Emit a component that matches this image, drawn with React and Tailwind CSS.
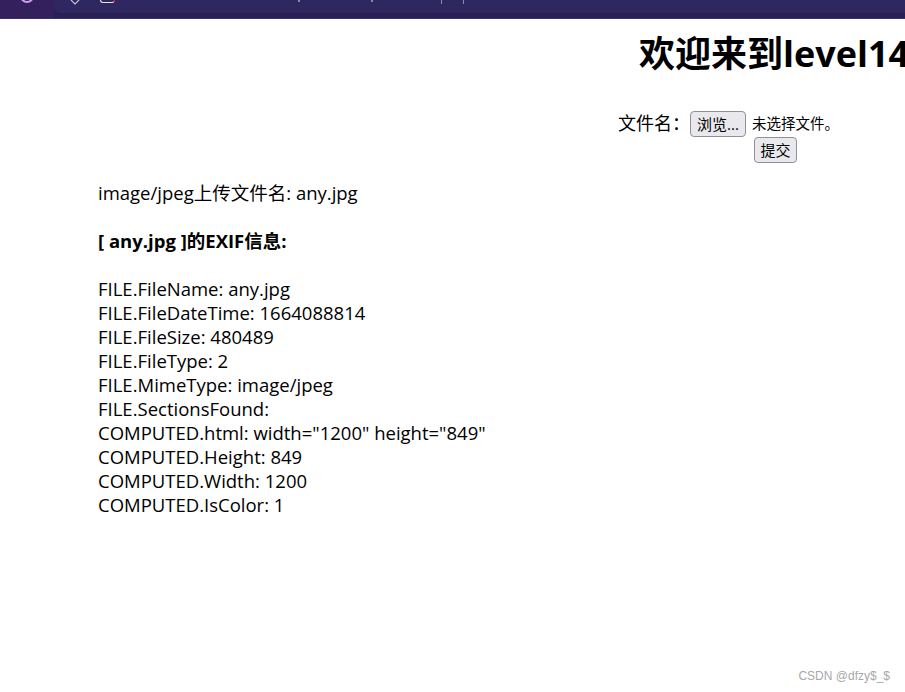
const font = { fontFamily: '"Open Sans", "Noto Sans CJK SC", sans-serif' }

const exifRows = [
  'FILE.FileName: any.jpg',
  'FILE.FileDateTime: 1664088814',
  'FILE.FileSize: 480489',
  'FILE.FileType: 2',
  'FILE.MimeType: image/jpeg',
  'FILE.SectionsFound:',
  'COMPUTED.html: width="1200" height="849"',
  'COMPUTED.Height: 849',
  'COMPUTED.Width: 1200',
  'COMPUTED.IsColor: 1',
]

function BrowserBar() {
  return (
    <div className="h-[19px] bg-[#2a1f55] border-b border-[#3a2f70] overflow-hidden">
      <div className="flex h-[18px]">
        <div className="w-[54px] h-full bg-[#33205c] flex justify-center">
          <div className="w-[14px] h-[14px] -mt-[11px] rounded-full border-2 border-[#c9a0f0]" />
        </div>
        <div className="flex-1 h-[13px] bg-[#2f2760] rounded-bl-md flex items-start">
          <div className="ml-[17px] w-[8px] h-[8px] -mt-[5px] rotate-45 border border-[#d8d4e8]" />
          <div className="ml-[21px] w-[15px] h-[3px] border-b border-l border-r border-[#e6e3f0] border-r-[#e0304a] rounded-b-sm" />
          <div className="ml-[183px] w-[2px] h-[2px] bg-[#8f8ab0]" />
          <div className="ml-[71px] w-[2px] h-[2px] bg-[#8f8ab0]" />
          <div className="ml-[68px] w-[1px] h-[4px] bg-[#8f8ab0]" />
          <div className="ml-[21px] w-[1px] h-[4px] bg-[#8f8ab0]" />
        </div>
      </div>
    </div>
  )
}

export default function App() {
  return (
    <div className="relative h-[692px] w-[905px] overflow-hidden bg-white text-black" style={font}>
      <BrowserBar />

      <h1 className="pl-[639px] pt-[13px] h-[72px] text-[36px] leading-[44px] font-bold whitespace-nowrap">欢迎来到level14</h1>

      <form className="pl-[618px] h-[90px] pt-[20px]">
        <div className="flex items-center h-[26px] whitespace-nowrap">
          <span className="text-[18px] -mt-[2px]">文件名：</span>
          <button type="button" className="h-[26px] w-[56px] rounded-[4px] border border-[#8f8f9d] bg-[#e9e9ed] text-[15px] leading-[22px]">浏览...</button>
          <span className="ml-[6px] text-[14.5px]">未选择文件。</span>
        </div>
        <button type="button" className="ml-[136px] h-[26px] w-[43px] rounded-[4px] border border-[#8f8f9d] bg-[#e9e9ed] text-[15px] leading-[22px]">提交</button>
      </form>

      <div className="pl-[98px] text-[18.5px] leading-[24px]">
        <p>image/jpeg上传文件名: any.jpg</p>
        <p className="mt-[24px] font-bold">[ any.jpg ]的EXIF信息:</p>
        <div className="mt-[24px]">
          {exifRows.map(row => (
            <div key={row}>{row}</div>
          ))}
        </div>
      </div>

      <div className="absolute right-[15px] top-[668px] text-[12px] leading-[16px] text-[#a8a8a8]" style={{ fontFamily: '"Liberation Sans", sans-serif' }}>CSDN @dfzy$_$</div>
    </div>
  )
}
